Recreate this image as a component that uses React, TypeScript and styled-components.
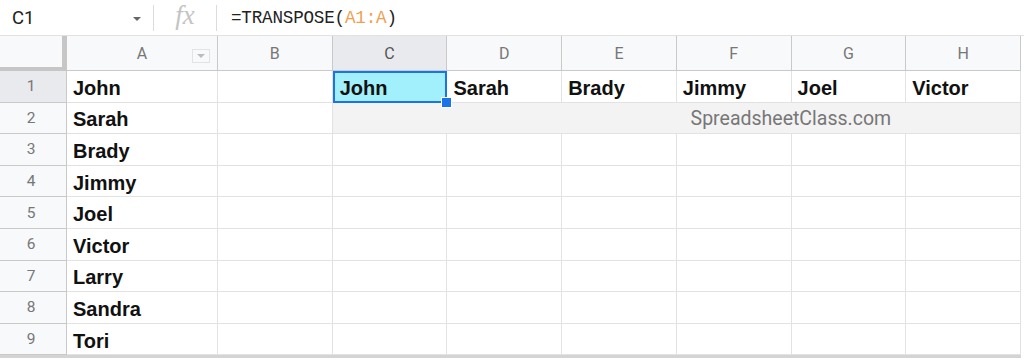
import React from 'react';
import styled, { createGlobalStyle } from 'styled-components';

const GlobalStyle = createGlobalStyle`
body{
    margin:0;
    background:#fff;
    font-family:Roboto, "Liberation Sans", Arial, sans-serif;
}
`;

const Page = styled.div`
width:1024px;
height:358px;
overflow:hidden;
background:#fff;
`;

const FormulaBar = styled.div`
display:flex;
align-items:center;
height:35px;
border-bottom:1px solid #e1e1e1;
`;

const NameBox = styled.div`
width:153px;
box-sizing:border-box;
padding:0 12px 0 12px;
display:flex;
align-items:center;
justify-content:space-between;
font-size:18.5px;
color:#222;
`;

const Caret = styled.span`
width:0;
height:0;
border-left:4px solid transparent;
border-right:4px solid transparent;
border-top:4px solid #666;
margin-top:3px;
`;

const Divider = styled.div`
width:1px;
height:26px;
background:#dadce0;
`;

const Fx = styled.div`
width:62px;
text-align:center;
font-family:"Liberation Serif", "DejaVu Serif", serif;
font-style:italic;
font-size:27px;
color:#c4c4c4;
line-height:1;
margin-top:-4px;
`;

const Formula = styled.div`
padding-left:14px;
font-family:"Liberation Mono", "DejaVu Sans Mono", monospace;
font-size:17.6px;
color:#222;
letter-spacing:-0.2px;
`;

const Ref = styled.span`
color:#f0a050;
`;

const Sheet = styled.div`
display:grid;
width:1021px;
grid-template-columns:67px 151px repeat(7, 1fr);
grid-template-rows:35px repeat(9, 31.6px);
border-bottom:3px solid #d4d4d4;
`;

const Corner = styled.div`
background:#f8f9fa;
box-sizing:border-box;
border-right:5px solid #c6c6c6;
border-bottom:4px solid #c6c6c6;
`;

const ColHeader = styled.div<{ $active?: boolean }>`
position:relative;
display:flex;
align-items:center;
justify-content:center;
box-sizing:border-box;
background:${p => (p.$active ? '#e8eaed' : '#f8f9fa')};
border-right:1px solid #c9c9c9;
border-bottom:1px solid #c9c9c9;
font-size:16px;
color:${p => (p.$active ? '#555' : '#777')};
`;

const FilterButton = styled.span`
position:absolute;
right:7px;
top:13px;
width:18px;
height:14px;
box-sizing:border-box;
border:1px solid #e3e3e3;
display:flex;
align-items:center;
justify-content:center;
&::after{
    content:'';
    border-left:4px solid transparent;
    border-right:4px solid transparent;
    border-top:4px solid #bcbcbc;
}
`;

const RowHeader = styled.div<{ $active?: boolean }>`
display:flex;
align-items:center;
justify-content:center;
box-sizing:border-box;
padding-right:4px;
background:${p => (p.$active ? '#e8eaed' : '#f8f9fa')};
border-right:1px solid #c9c9c9;
border-bottom:1px solid #c9c9c9;
font-size:15.5px;
color:#777;
`;

const Cell = styled.div<{ $selected?: boolean }>`
position:relative;
display:flex;
align-items:center;
box-sizing:border-box;
padding:4px 0 0 6px;
border-right:1px solid #e2e2e2;
border-bottom:1px solid #e2e2e2;
font-family:"Liberation Sans", Arial, sans-serif;
font-weight:bold;
font-size:20px;
color:#111;
white-space:nowrap;
${p => p.$selected && `
    background:#a2f0fb;
    border:2px solid #1a73e8;
    padding-left:5px;
`}
`;

const Handle = styled.span`
position:absolute;
right:-7px;
bottom:-7px;
width:9px;
height:9px;
background:#1a73e8;
border:1px solid #fff;
z-index:2;
`;

const Banner = styled.div`
grid-column:span 6;
display:flex;
align-items:center;
justify-content:center;
padding:2px 0 0 229px;
background:#f3f3f3;
border-bottom:1px solid #e2e2e2;
border-right:1px solid #e2e2e2;
font-size:19.5px;
color:#777;
`;

const columns = ['A', 'B', 'C', 'D', 'E', 'F', 'G', 'H'];
const names = ['John', 'Sarah', 'Brady', 'Jimmy', 'Joel', 'Victor', 'Larry', 'Sandra', 'Tori'];
const transposed = ['John', 'Sarah', 'Brady', 'Jimmy', 'Joel', 'Victor'];

export default function App() {
    return (
        <Page>
            <GlobalStyle />
            <FormulaBar>
                <NameBox>
                    C1
                    <Caret />
                </NameBox>
                <Divider />
                <Fx>fx</Fx>
                <Divider />
                <Formula>
                    =TRANSPOSE(<Ref>A1:A</Ref>)
                </Formula>
            </FormulaBar>
            <Sheet>
                <Corner />
                {columns.map(c => (
                    <ColHeader key={c} $active={c === 'C'}>
                        {c}
                        {c === 'A' && <FilterButton />}
                    </ColHeader>
                ))}
                {names.map((name, i) => (
                    <React.Fragment key={name}>
                        <RowHeader $active={i === 0}>{i + 1}</RowHeader>
                        <Cell>{name}</Cell>
                        <Cell />
                        {i === 0 &&
                            transposed.map((t, j) => (
                                <Cell key={t} $selected={j === 0}>
                                    {t}
                                    {j === 0 && <Handle />}
                                </Cell>
                            ))}
                        {i === 1 && <Banner>SpreadsheetClass.com</Banner>}
                        {i > 1 && [0, 1, 2, 3, 4, 5].map(k => <Cell key={k} />)}
                    </React.Fragment>
                ))}
            </Sheet>
        </Page>
    );
}
